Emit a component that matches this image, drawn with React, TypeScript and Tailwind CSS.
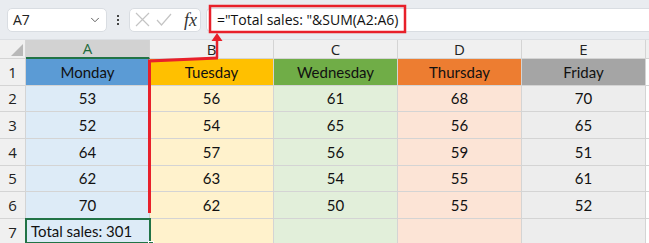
import { ChevronDown } from "lucide-react";

const cols = [
  { letter: "A", day: "Monday", head: "bg-[#5b9bd5]", cell: "bg-[#ddebf7]", vals: [53, 52, 64, 62, 70] },
  { letter: "B", day: "Tuesday", head: "bg-[#ffc000]", cell: "bg-[#fff2cc]", vals: [56, 54, 57, 63, 62] },
  { letter: "C", day: "Wednesday", head: "bg-[#70ad47]", cell: "bg-[#e2efda]", vals: [61, 65, 56, 54, 50] },
  { letter: "D", day: "Thursday", head: "bg-[#ed7d31]", cell: "bg-[#fce4d6]", vals: [68, 56, 59, 55, 55] },
  { letter: "E", day: "Friday", head: "bg-[#a5a5a5]", cell: "bg-[#ededed]", vals: [70, 65, 51, 61, 52] },
];

const rowHeights = ["h-[27px]", "h-[26px]", "h-[27px]", "h-[27px]", "h-[26px]", "h-[27px]", "h-[24px]"];

const cellFont = { fontFamily: "Lato, 'Noto Sans', sans-serif" };

function RowHead({ n, h }: { n: number; h: string }) {
  return (
    <div className={`${h} w-[26px] shrink-0 flex items-center justify-center bg-[#f0f0f0] border-r border-b border-[#d4d4d4] text-[15px] text-[#222]`}>
      {n}
    </div>
  );
}

export default function App() {
  return (
    <div className="relative w-[649px] h-[243px] overflow-hidden bg-white" style={{ fontFamily: "'Open Sans', 'Noto Sans', sans-serif" }}>
      {/* formula bar */}
      <div className="h-[40px] bg-[#e9ecf0] flex items-center pl-[7px] border-b border-[#dcdfe3]">
        <div className="w-[100px] h-[24px] bg-white rounded-[5px] border border-[#d9dde2] flex items-center justify-between pl-[5px] pr-[4px] text-[14px] text-[#222]">
          <span>A7</span>
          <ChevronDown className="w-[14px] h-[14px] text-[#555]" strokeWidth={1.6} />
        </div>
        <div className="w-[22px] flex flex-col items-center gap-[2px]">
          <span className="w-[2px] h-[2px] bg-[#444]" />
          <span className="w-[2px] h-[2px] bg-[#444]" />
          <span className="w-[2px] h-[2px] bg-[#444]" />
        </div>
        <div className="w-[72px] h-[24px] bg-white rounded-[5px] border border-[#d9dde2] flex items-center pl-[5px] gap-[6px]">
          <svg width="15" height="15" viewBox="0 0 15 15" className="text-[#c4c4c4]">
            <path d="M1 1 L14 14 M14 1 L1 14" stroke="currentColor" strokeWidth="1.2" fill="none" />
          </svg>
          <svg width="16" height="13" viewBox="0 0 16 13" className="text-[#c4c4c4]">
            <path d="M1 7 L5.5 12 L15 1" stroke="currentColor" strokeWidth="1.2" fill="none" />
          </svg>
          <span className="ml-[6px] text-[18px] leading-none italic text-[#333]" style={{ fontFamily: "'Liberation Serif', serif" }}>fx</span>
        </div>
        <div className="ml-[5px] flex-1 h-[24px] bg-white rounded-l-[5px] border border-[#d9dde2] border-r-0 flex items-center pl-[10px] text-[14px] text-[#111]">
          ="Total sales: "&amp;SUM(A2:A6)
        </div>
      </div>

      {/* column headers */}
      <div className="flex h-[19px]">
        <div className="w-[26px] shrink-0 bg-[#f0f0f0] border-r border-b border-[#d4d4d4] relative">
          <div className="absolute right-[2px] bottom-[2px] w-0 h-0 border-l-[12px] border-l-transparent border-b-[12px] border-b-[#b8b8b8]" />
        </div>
        {cols.map((c, i) => (
          <div
            key={c.letter}
            className={`w-[124px] shrink-0 flex items-center justify-center text-[15px] border-r border-[#d4d4d4] ${
              i === 0 ? "bg-[#d2d2d2] text-[#1e6b3c] border-b-2 border-b-[#217346]" : "bg-[#f0f0f0] text-[#222] border-b"
            }`}
          >
            {c.letter}
          </div>
        ))}
        <div className="flex-1 bg-[#f0f0f0] border-b border-[#d4d4d4]" />
      </div>

      {/* row 1: day names */}
      <div className="flex">
        <RowHead n={1} h={rowHeights[0]} />
        {cols.map((c) => (
          <div key={c.day} className={`${rowHeights[0]} w-[124px] shrink-0 ${c.head} border-r border-b border-[#d4d4d4] flex items-center justify-center text-[15px] text-[#111]`} style={cellFont}>
            {c.day}
          </div>
        ))}
        <div className={`${rowHeights[0]} flex-1 border-b border-[#d4d4d4]`} />
      </div>

      {/* rows 2-6 */}
      {[0, 1, 2, 3, 4].map((r) => (
        <div key={r} className="flex">
          <RowHead n={r + 2} h={rowHeights[r + 1]} />
          {cols.map((c) => (
            <div key={c.letter} className={`${rowHeights[r + 1]} w-[124px] shrink-0 ${c.cell} border-r border-b border-[#d4d4d4] flex items-center justify-center text-[15px] text-[#111]`} style={cellFont}>
              {c.vals[r]}
            </div>
          ))}
          <div className={`${rowHeights[r + 1]} flex-1 border-b border-[#d4d4d4]`} />
        </div>
      ))}

      {/* row 7 */}
      <div className="flex">
        <RowHead n={7} h="h-[27px]" />
        {cols.map((c, i) =>
          i === 0 ? (
            <div key={c.letter} className={`h-[27px] w-[124px] shrink-0 ${c.cell} relative`} style={cellFont}>
              <div className="absolute -left-[1px] -top-[1px] w-[126px] h-[26px] border-2 border-[#217346] flex items-center pl-[4px] text-[15px] text-[#111]">
                Total sales: 301
              </div>
              <div className="absolute right-[-4px] bottom-[-1px] w-[6px] h-[6px] bg-[#217346] border border-white" />
            </div>
          ) : (
            <div key={c.letter} className={`h-[27px] w-[124px] shrink-0 ${c.cell} border-r border-[#d4d4d4]`} />
          )
        )}
        <div className="h-[27px] flex-1" />
      </div>

      {/* red annotation */}
      <svg className="absolute inset-0 pointer-events-none" width="649" height="243">
        <rect x="210" y="6" width="195" height="26" fill="none" stroke="#e8202a" strokeWidth="2.5" />
        <path d="M217 58 L217 38" stroke="#e8202a" strokeWidth="2.5" fill="none" />
        <path d="M211.5 41 L217 33 L222.5 41 Z" fill="#e8202a" />
        <path d="M218 58 L149.5 61 L149.5 213" stroke="#e8202a" strokeWidth="3" fill="none" strokeLinejoin="miter" />
      </svg>
    </div>
  );
}
